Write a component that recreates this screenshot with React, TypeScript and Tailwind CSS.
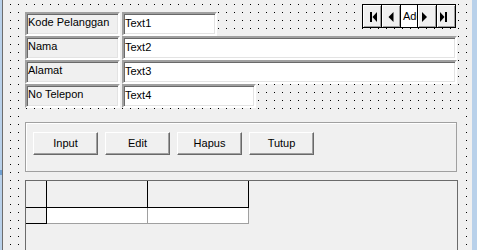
import React from "react";

// VB6-style form designer: customer data entry form
const sunken =
  "border-2 border-t-[#a0a0a0] border-l-[#a0a0a0] border-r-white border-b-white shadow-[inset_1px_1px_0_#696969,inset_-1px_-1px_0_#e3e3e3]";
const raised =
  "border border-t-white border-l-white border-r-[#696969] border-b-[#696969] shadow-[inset_-1px_-1px_0_#a0a0a0]";

const fields = [
  { label: "Kode Pelanggan", text: "Text1", w: "w-[95px]" },
  { label: "Nama", text: "Text2", w: "w-[335px]" },
  { label: "Alamat", text: "Text3", w: "w-[335px]" },
  { label: "No Telepon", text: "Text4", w: "w-[134px]" },
];

function NavButton({ children, last }: { children: React.ReactNode; last?: boolean }) {
  return (
    <div
      className={`${last ? "w-[18px]" : "w-[19px] border-r border-black"} h-full bg-[#f0f0f0] shadow-[inset_1px_1px_0_#fff,inset_-1px_-1px_0_#a0a0a0]`}
    >
      <svg width="18" height="22" viewBox="0 0 18 22">
        {children}
      </svg>
    </div>
  );
}

function AdoNavigator() {
  return (
    <div className="flex h-[24px] w-[94px] border border-black -mt-[8px] ml-[145px] shrink-0">
      <NavButton>
        <rect x="7" y="7" width="2" height="10" fill="#000" />
        <polygon points="14,7 9.5,12 14,17" fill="#000" />
      </NavButton>
      <NavButton>
        <polygon points="11.5,7 6.5,12 11.5,17" fill="#000" />
      </NavButton>
      <div className="w-[17px] h-full border-r border-black bg-white overflow-hidden whitespace-nowrap pl-[2px] leading-[22px]">
        Adodc1
      </div>
      <NavButton>
        <polygon points="4,7 9,12 4,17" fill="#000" />
      </NavButton>
      <NavButton last>
        <polygon points="3,7 7.5,12 3,17" fill="#000" />
        <rect x="8" y="7" width="2" height="10" fill="#000" />
      </NavButton>
    </div>
  );
}

export default function App() {
  return (
    <div className="w-[477px] h-[250px] overflow-hidden flex bg-[#f0f0f0] text-[11px] text-black font-['Liberation_Sans',Arial,sans-serif]">
      <div className="relative w-[2px] shrink-0 bg-[#b9d1ea]">
        <div className="absolute left-0 top-[170px] w-[2px] h-[5px] bg-[#6f9fd0]" />
      </div>
      <div className="w-[1px] shrink-0 bg-[#6d6d6d]" />

      <div className="relative flex-1 min-w-0">
        {/* designer dot grid */}
        <svg className="absolute inset-0" width="100%" height="100%">
          <defs>
            <pattern id="dots" width="8" height="8" patternUnits="userSpaceOnUse">
              <rect x="7" y="4" width="1" height="1" fill="#000" />
            </pattern>
          </defs>
          <rect width="100%" height="100%" fill="url(#dots)" />
        </svg>

        {/* fields */}
        <div className="relative pt-[12px] pl-[22px] flex flex-col">
          {fields.map((f, i) => (
            <div key={f.label} className="flex items-start h-[24px]">
              <div className={`${sunken} w-[95px] h-[24px] bg-[#f0f0f0] pl-[1px] pt-[2px] leading-[13px] whitespace-nowrap`}>
                {f.label}
              </div>
              <div className={`${sunken} ${f.w} h-[24px] ml-[2px] bg-white pl-[1px] pt-[3px] leading-[13px]`}>
                {f.text}
              </div>
              {i === 0 && <AdoNavigator />}
            </div>
          ))}
        </div>

        {/* lower area */}
        <div className="relative mt-[4px] ml-[19px] w-[440px] h-[200px] bg-[#f0f0f0] pt-[10px] pl-[3px]">
          <div className="w-[432px] h-[50px] border border-[#a0a0a0] shadow-[inset_1px_1px_0_#fff] pt-[9px] pl-[7px] flex gap-[7px]">
            {["Input", "Edit", "Hapus", "Tutup"].map((b) => (
              <div
                key={b}
                className={`${raised} w-[65px] h-[23px] bg-[#f0f0f0] flex items-center justify-center`}
              >
                {b}
              </div>
            ))}
          </div>

          <div className="mt-[8px] w-[433px] h-[100px] border border-[#6b6b6b]">
            <div className="w-[223px]">
              <div className="flex h-[27px] border-b border-black">
                <div className="w-[21px] border-r border-black" />
                <div className="w-[101px] border-r border-black" />
                <div className="w-[101px] border-r border-black" />
              </div>
              <div className="flex h-[16px]">
                <div className="w-[21px] border-r border-b border-black bg-[#f0f0f0]" />
                <div className="w-[101px] border-r border-b border-[#a0a0a0] bg-white" />
                <div className="w-[101px] border-r border-b border-[#a0a0a0] bg-white" />
              </div>
            </div>
          </div>
        </div>
      </div>

      <div className="w-[5px] shrink-0 bg-[#b9d1ea]" />
    </div>
  );
}
